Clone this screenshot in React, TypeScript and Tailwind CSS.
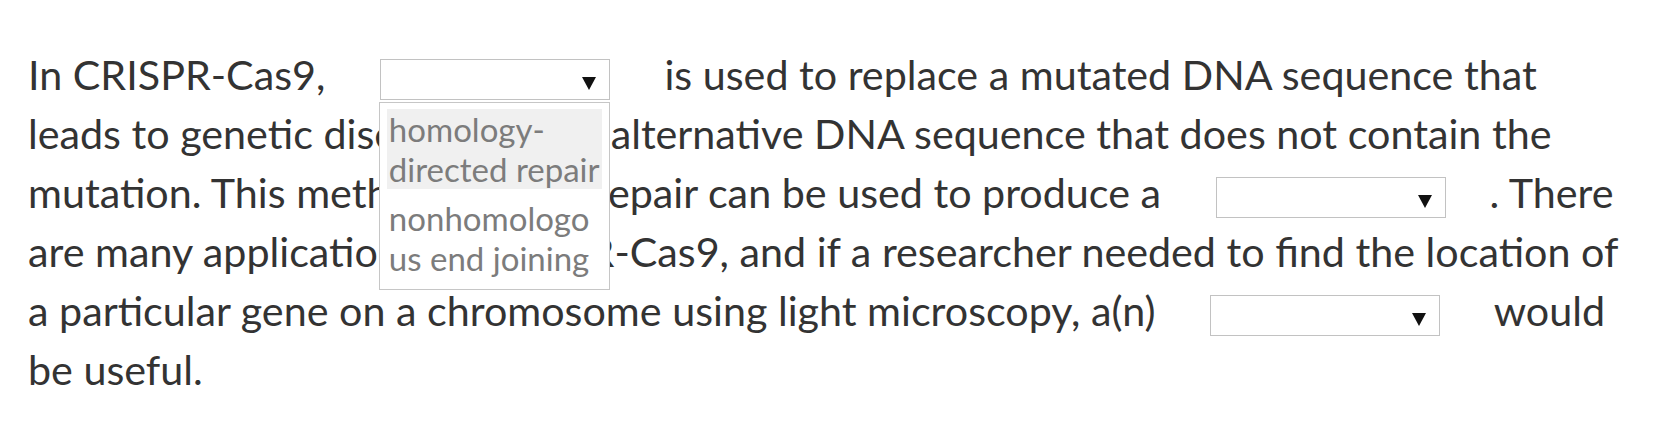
import { useState } from "react";

interface BlankSelectProps {
  options?: string[];
  open?: boolean;
  highlighted?: number;
  className?: string;
}

function BlankSelect({
  options = [],
  open = false,
  highlighted = 0,
  className = "",
}: Readonly<BlankSelectProps>) {
  return (
    <span
      className={`relative inline-block w-[230px] h-[41px] align-middle border border-[#c2c2c2] bg-white ${className}`}
    >
      <svg
        className="absolute right-[13px] top-[17px]"
        width="14"
        height="13"
        viewBox="0 0 14 13"
      >
        <polygon points="0,0 14,0 7,13" fill="#111" />
      </svg>
      {open && (
        <span className="absolute left-[-2px] top-[42px] z-10 flex w-[231px] flex-col gap-[9px] border border-[#c6c6c6] bg-white px-[7px] pt-[6px] pb-[11px]">
          {options.map((option, index) => (
            <span
              key={option}
              className={`block pl-[2px] text-[33px] leading-[40px] text-[#7c7c7c] break-words ${
                index === highlighted ? "bg-[#f0f0f0]" : ""
              }`}
            >
              {option}
            </span>
          ))}
        </span>
      )}
    </span>
  );
}

export default function App() {
  const [repairOptions] = useState([
    "homology-directed repair",
    "nonhomologous end joining",
  ]);

  return (
    <div className="min-h-screen bg-white pl-[28px] pt-[45px]">
      <p className="w-[1600px] font-['Lato',sans-serif] text-[41.25px] leading-[59px] text-[#333]">
        In CRISPR-Cas9,{" "}
        <BlankSelect className="mx-[44px]" options={repairOptions} open />{" "}
        is used to replace a mutated DNA sequence that leads to genetic disease
        with an alternative DNA sequence that does not contain the mutation.
        This method of DNA repair can be used to produce a{" "}
        <BlankSelect className="mx-[44px]" />. There are many applications of
        CRISPR-Cas9, and if a researcher needed to find the location of a
        particular gene on a chromosome using light microscopy, a(n){" "}
        <BlankSelect className="mx-[44px]" /> would be useful.
      </p>
    </div>
  );
}
